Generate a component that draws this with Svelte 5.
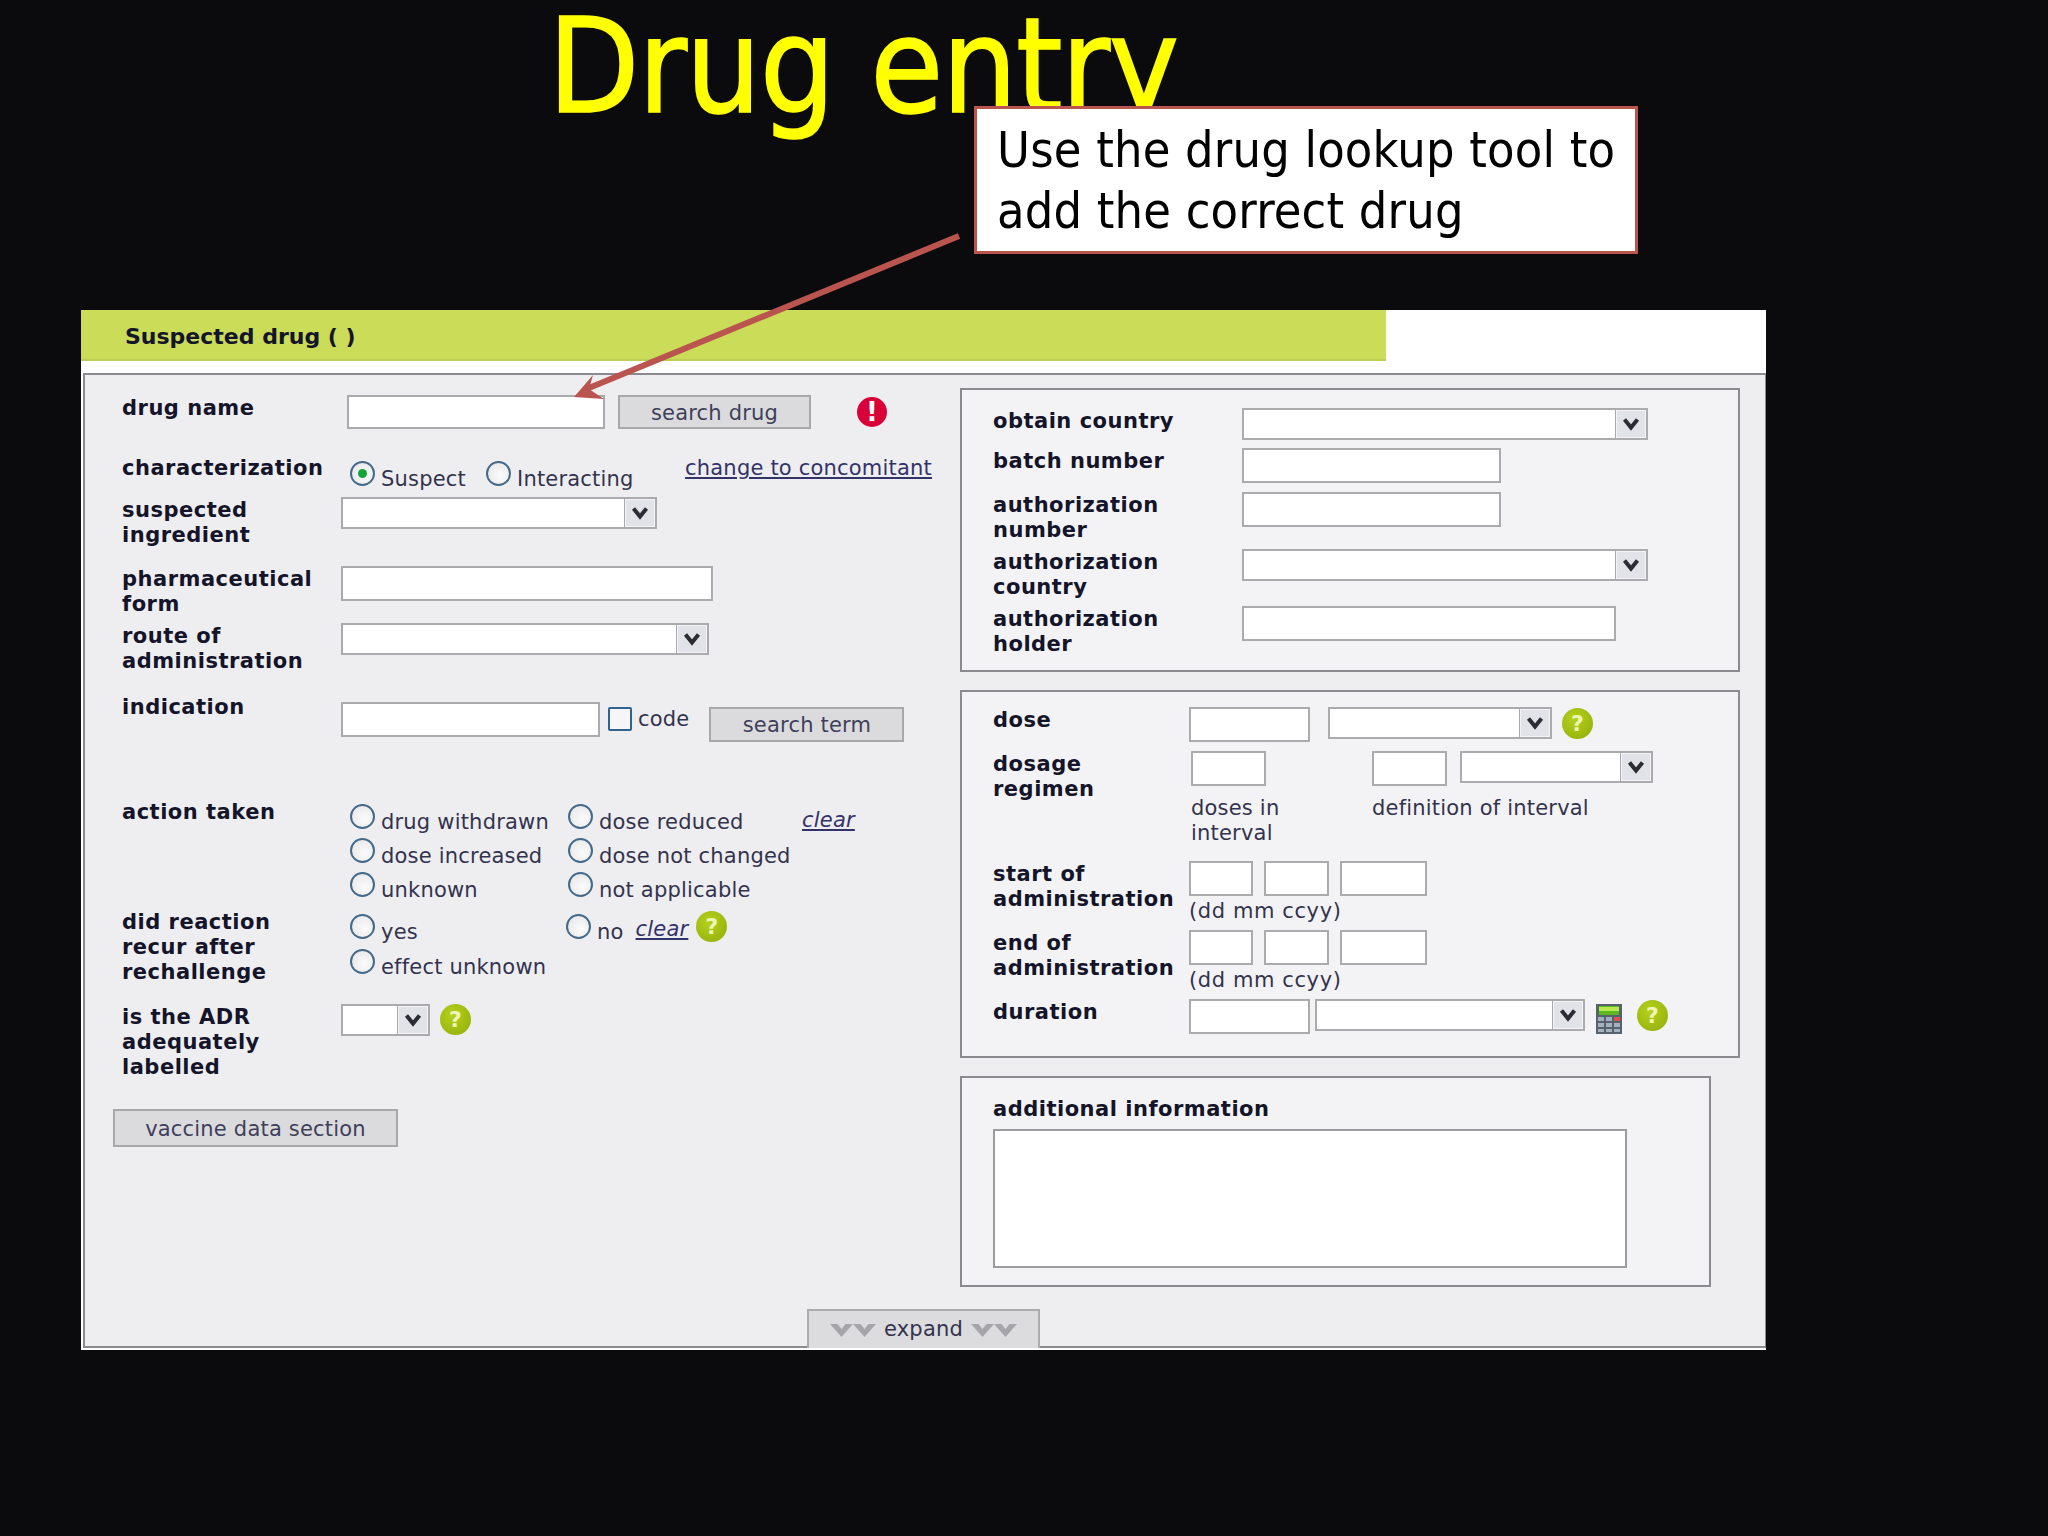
<script>
  const actionOptions = [
    "drug withdrawn",
    "dose reduced",
    "dose increased",
    "dose not changed",
    "unknown",
    "not applicable",
  ];
</script>

{#snippet radio(text, checked = false)}
  <label class="opt">
    <span class="radio" class:checked></span>
    <span class="opt-text">{text}</span>
  </label>
{/snippet}

{#snippet dropdown(size)}
  <div class="select {size}">
    <span class="select-btn">
      <svg width="20" height="16" viewBox="0 0 20 16"><path d="M3.5 3.5 L10 11.5 L16.5 3.5" fill="none" stroke="#2c2c34" stroke-width="4" /></svg>
    </span>
  </div>
{/snippet}

{#snippet help()}
  <span class="help">?</span>
{/snippet}

{#snippet chevrons()}
  <svg width="46" height="16" viewBox="0 0 46 16"><path d="M0 2 L11.5 15 L23 2 L34.5 15 L46 2 L38.5 2 L34.5 7 L30.5 2 L15.5 2 L11.5 7 L7.5 2 Z" fill="#a6a6aa" /></svg>
{/snippet}

<div class="slide">
  <h1 class="title">Drug entry</h1>

  <div class="sheet">
    <div class="band">Suspected drug ( )</div>

    <div class="form">
      <div class="columns">
        <div class="left">
          <div class="row r-drug">
            <span class="lbl">drug name</span>
            <div class="fields">
              <input class="inp w-drug" />
              <button class="btn b-drug">search drug</button>
              <span class="alert">!</span>
            </div>
          </div>

          <div class="row r-char">
            <span class="lbl">characterization</span>
            <div class="fields char-fields">
              <div class="char-radios">
                {@render radio("Suspect", true)}
                {@render radio("Interacting")}
              </div>
              <a class="link" href="#top">change to concomitant</a>
            </div>
          </div>

          <div class="row r-ingredient">
            <span class="lbl">suspected<br />ingredient</span>
            <div class="fields">{@render dropdown("s-316")}</div>
          </div>

          <div class="row r-form">
            <span class="lbl">pharmaceutical<br />form</span>
            <div class="fields"><input class="inp w-form" /></div>
          </div>

          <div class="row r-route">
            <span class="lbl">route of<br />administration</span>
            <div class="fields">{@render dropdown("s-368")}</div>
          </div>

          <div class="row r-indication">
            <span class="lbl">indication</span>
            <div class="fields ind-fields">
              <input class="inp w-ind" />
              <span class="check"></span>
              <span class="code">code</span>
              <button class="btn b-term">search term</button>
            </div>
          </div>

          <div class="row r-action">
            <span class="lbl">action taken</span>
            <div class="action-grid">
              {#each actionOptions as option, i (option)}
                {@render radio(option)}
                {#if i === 1}
                  <a class="clear clear-action" href="#top">clear</a>
                {:else if i % 2 === 1}
                  <span></span>
                {/if}
              {/each}
            </div>
          </div>

          <div class="row r-recur">
            <span class="lbl">did reaction<br />recur after<br />rechallenge</span>
            <div class="recur">
              <div class="recur-line">
                <div class="yes">{@render radio("yes")}</div>
                {@render radio("no")}
                <a class="clear clear-recur" href="#top">clear</a>
                <span class="recur-help">{@render help()}</span>
              </div>
              {@render radio("effect unknown")}
            </div>
          </div>

          <div class="row r-adr">
            <span class="lbl">is the ADR<br />adequately<br />labelled</span>
            <div class="fields adr-fields">
              {@render dropdown("s-89")}
              {@render help()}
            </div>
          </div>

          <button class="btn b-vaccine">vaccine data section</button>
        </div>

        <div class="right">
          <section class="box box-country">
            <div class="brow h40">
              <span class="lbl c249">obtain country</span>
              {@render dropdown("s-406")}
            </div>
            <div class="brow h44">
              <span class="lbl c249">batch number</span>
              <input class="inp w-259" />
            </div>
            <div class="brow h57">
              <span class="lbl c249">authorization<br />number</span>
              <input class="inp w-259" />
            </div>
            <div class="brow h57">
              <span class="lbl c249">authorization<br />country</span>
              {@render dropdown("s-406")}
            </div>
            <div class="brow">
              <span class="lbl c249">authorization<br />holder</span>
              <input class="inp w-374" />
            </div>
          </section>

          <section class="box box-dose">
            <div class="brow h44">
              <span class="lbl c196">dose</span>
              <input class="inp w-121" />
              {@render dropdown("s-224")}
              <span class="dose-help">{@render help()}</span>
            </div>
            <div class="brow h110">
              <span class="lbl c196">dosage<br />regimen</span>
              <div class="regimen">
                <div class="reg-col reg-first">
                  <input class="inp w-75" />
                  <span class="note">doses in<br />interval</span>
                </div>
                <div class="reg-col">
                  <div class="reg-line">
                    <input class="inp w-75" />
                    {@render dropdown("s-193")}
                  </div>
                  <span class="note">definition of interval</span>
                </div>
              </div>
            </div>
            <div class="brow h69">
              <span class="lbl c196">start of<br />administration</span>
              <div>
                <div class="dates">
                  <input class="inp w-64" />
                  <input class="inp w-65" />
                  <input class="inp w-87" />
                </div>
                <span class="note">(dd mm ccyy)</span>
              </div>
            </div>
            <div class="brow h69">
              <span class="lbl c196">end of<br />administration</span>
              <div>
                <div class="dates">
                  <input class="inp w-64" />
                  <input class="inp w-65" />
                  <input class="inp w-87" />
                </div>
                <span class="note">(dd mm ccyy)</span>
              </div>
            </div>
            <div class="brow">
              <span class="lbl c196">duration</span>
              <input class="inp w-121" />
              {@render dropdown("s-270")}
              <svg class="calc" width="26" height="30" viewBox="0 0 26 30">
                <rect width="26" height="30" fill="#56636f" />
                <rect x="3" y="2" width="20" height="9" fill="#5fb81e" />
                <rect x="3" y="3" width="20" height="4" fill="#b8ea50" />
                <g fill="#a4b0bd">
                  <rect x="2" y="13" width="6" height="4" />
                  <rect x="10" y="13" width="6" height="4" />
                  <rect x="2" y="19" width="6" height="4" />
                  <rect x="10" y="19" width="6" height="4" />
                  <rect x="18" y="19" width="6" height="4" />
                  <rect x="2" y="25" width="6" height="3" />
                  <rect x="10" y="25" width="6" height="3" />
                  <rect x="18" y="25" width="6" height="3" />
                </g>
                <rect x="18" y="13" width="6" height="4" fill="#d9534f" />
              </svg>
              <span class="dur-help">{@render help()}</span>
            </div>
          </section>

          <section class="box box-info">
            <span class="lbl">additional information</span>
            <textarea class="info"></textarea>
          </section>
        </div>
      </div>

      <div class="tab">
        {@render chevrons()}
        <span>expand</span>
        {@render chevrons()}
      </div>
    </div>
  </div>

  <svg class="arrow" width="2048" height="1536" viewBox="0 0 2048 1536">
    <path d="M959 236 L584 390" fill="none" stroke="#b9544f" stroke-width="6" />
    <path d="M574 397 L593 375 L589 389 L604 399 Z" fill="#b9544f" />
  </svg>

  <div class="callout">Use the drug lookup tool to<br />add the correct drug</div>
</div>

<style>
  :global(body) {
    margin: 0;
    background: #0b0b0d;
  }

  .slide {
    position: relative;
    width: 2048px;
    height: 1536px;
    overflow: hidden;
    background: #0b0b0d;
    font-family: "DejaVu Sans", Verdana, sans-serif;
    font-size: 21px;
    letter-spacing: 0.2px;
    line-height: 25px;
    color: #33334f;
  }

  .title {
    margin: 0;
    height: 310px;
    padding-left: 548px;
    box-sizing: border-box;
    font-family: "DejaVu Sans Condensed", "DejaVu Sans", sans-serif;
    font-weight: 400;
    font-size: 132px;
    letter-spacing: -1.3px;
    line-height: 133px;
    color: #ffff00;
    -webkit-text-stroke: 1.5px #ffff00;
  }

  .sheet {
    width: 1685px;
    height: 1040px;
    margin-left: 81px;
    background: #fff;
    box-sizing: border-box;
    padding-left: 2px;
    display: flex;
    flex-direction: column;
  }

  .band {
    width: 1305px;
    height: 51px;
    margin: 0 0 12px -2px;
    padding-left: 44px;
    box-sizing: border-box;
    background: #cadc58;
    border-bottom: 2px solid #bccf55;
    font-weight: 700;
    font-size: 22px;
    letter-spacing: 0;
    line-height: 54px;
    color: #14142a;
  }

  .form {
    height: 975px;
    box-sizing: border-box;
    border: 2px solid #8b8b8f;
    border-right-width: 1px;
    background: #eeeef0;
    display: flex;
    flex-direction: column;
  }

  .columns {
    flex: 1;
    display: flex;
  }

  .left {
    width: 875px;
    padding: 20px 0 0 37px;
    box-sizing: border-box;
  }

  .right {
    padding-top: 13px;
    display: flex;
    flex-direction: column;
    gap: 18px;
  }

  .lbl {
    padding-top: 1px;
    font-weight: 700;
    font-size: 21px;
    letter-spacing: 0.5px;
    color: #14142a;
    display: block;
    white-space: nowrap;
  }

  .row {
    display: flex;
  }

  .row > .lbl {
    width: 219px;
    flex: none;
  }

  .r-drug { height: 60px; }
  .r-char { height: 42px; }
  .r-ingredient { height: 69px; }
  .r-form { height: 57px; }
  .r-route { height: 71px; }
  .r-indication { height: 105px; }
  .r-action { height: 110px; }
  .r-recur { height: 95px; }
  .r-adr { height: 105px; }

  .fields {
    display: flex;
    align-items: flex-start;
  }

  .inp {
    display: block;
    flex: none;
    height: 35px;
    box-sizing: border-box;
    padding: 0;
    border: 2px solid #ababad;
    border-radius: 0;
    background: #fff;
    outline: none;
  }

  .w-drug { width: 258px; height: 34px; margin-left: 6px; }
  .w-form { width: 372px; }
  .w-ind { width: 259px; margin-top: 8px; }
  .w-259 { width: 259px; }
  .w-374 { width: 374px; }
  .w-121 { width: 121px; }
  .w-75 { width: 75px; }
  .w-64 { width: 64px; }
  .w-65 { width: 65px; }
  .w-87 { width: 87px; }

  .btn {
    flex: none;
    box-sizing: border-box;
    padding: 2px 0 0;
    border: 2px solid #a8a8aa;
    background: #dbdbdd;
    color: #3f3f5c;
    font: inherit;
    letter-spacing: inherit;
    text-align: center;
  }

  .b-drug { width: 193px; height: 34px; margin-left: 13px; }
  .b-term { width: 195px; height: 35px; margin: 13px 0 0 20px; }
  .b-vaccine { width: 285px; height: 38px; margin-left: -9px; }

  .alert {
    width: 30px;
    height: 30px;
    margin: 2px 0 0 46px;
    border-radius: 50%;
    background: #d9003a;
    color: #fff;
    font-weight: 700;
    font-size: 26px;
    line-height: 30px;
    text-align: center;
  }

  .char-fields {
    width: 591px;
    justify-content: space-between;
  }

  .char-radios {
    display: flex;
    gap: 20px;
    margin: 6px 0 0 9px;
  }

  .link {
    margin-top: 1px;
    color: #33336b;
    text-decoration: underline;
    white-space: nowrap;
  }

  .opt {
    display: flex;
    gap: 6px;
    white-space: nowrap;
  }

  .opt-text {
    margin-top: 6px;
  }

  .radio {
    flex: none;
    width: 25px;
    height: 25px;
    box-sizing: border-box;
    border: 2.5px solid #44698a;
    border-radius: 50%;
    background: radial-gradient(circle at 60% 60%, #fbfbfb, #e4e4e6);
    display: flex;
    align-items: center;
    justify-content: center;
  }

  .radio.checked::after {
    content: "";
    width: 9px;
    height: 9px;
    border-radius: 50%;
    background: #12a33a;
  }

  .check {
    flex: none;
    width: 24px;
    height: 24px;
    box-sizing: border-box;
    margin: 13px 0 0 8px;
    border: 2px solid #2f628c;
    border-radius: 2px;
    background: #f6f6f8;
  }

  .code {
    margin: 13px 0 0 6px;
  }

  .select {
    flex: none;
    height: 32px;
    box-sizing: border-box;
    border: 2px solid #ababad;
    background: #fff;
    display: flex;
    justify-content: flex-end;
  }

  .select-btn {
    width: 30px;
    box-sizing: border-box;
    border: 1px solid #f4f4f6;
    background: #e2e2e9;
    box-shadow: -1px 0 0 #a8a8ae;
    display: flex;
    align-items: center;
    justify-content: center;
  }

  .s-316 { width: 316px; }
  .s-368 { width: 368px; }
  .s-89 { width: 89px; }
  .s-406 { width: 406px; }
  .s-224 { width: 224px; margin-left: 18px; }
  .s-193 { width: 193px; }
  .s-270 { width: 270px; margin-left: 5px; }

  .help {
    flex: none;
    width: 31px;
    height: 31px;
    border-radius: 50%;
    background: radial-gradient(circle at 40% 35%, #b5d01c, #90ad0a);
    color: #eef5b5;
    font-weight: 700;
    font-size: 22px;
    line-height: 31px;
    text-align: center;
    display: block;
  }

  .adr-fields {
    gap: 10px;
  }

  .action-grid {
    display: grid;
    grid-template-columns: 218px 234px auto;
    grid-auto-rows: 34px;
    margin: 5px 0 0 9px;
    align-self: flex-start;
  }

  .clear {
    font-style: italic;
    color: #33336b;
    text-decoration: underline;
  }

  .clear-action { margin-top: 4px; }

  .recur {
    margin: 5px 0 0 9px;
    display: flex;
    flex-direction: column;
  }

  .recur-line {
    display: flex;
    align-items: flex-start;
    height: 35px;
  }

  .yes { width: 216px; }
  .clear-recur { margin: 3px 0 0 12px; }
  .recur-help { margin: -3px 0 0 8px; }

  .box {
    box-sizing: border-box;
    width: 780px;
    border: 2px solid #8b8b8f;
    background: #f3f3f5;
    padding-left: 31px;
  }

  .box-country { height: 284px; padding-top: 18px; }
  .box-dose { height: 368px; padding-top: 15px; }
  .box-info { width: 751px; height: 211px; padding-top: 18px; }

  .brow {
    display: flex;
    align-items: flex-start;
  }

  .h40 { height: 40px; }
  .h44 { height: 44px; }
  .h57 { height: 57px; }
  .h69 { height: 69px; }
  .h110 { height: 110px; }

  .c249 { width: 249px; flex: none; }
  .c196 { width: 196px; flex: none; }

  .dose-help { margin: 1px 0 0 10px; }
  .dur-help { margin: 1px 0 0 15px; }
  .calc { flex: none; margin: 5px 0 0 11px; }

  .regimen {
    display: flex;
    margin-left: 2px;
  }

  .reg-col {
    width: 180px;
  }

  .reg-first {
    width: 181px;
  }

  .reg-line {
    display: flex;
    gap: 13px;
    width: 300px;
  }

  .note {
    display: block;
    margin-top: 10px;
    white-space: nowrap;
  }

  .dates {
    display: flex;
    gap: 11px;
  }

  .dates + .note {
    margin-top: 3px;
    letter-spacing: 0.6px;
  }

  .info {
    display: block;
    width: 634px;
    height: 139px;
    margin-top: 7px;
    box-sizing: border-box;
    padding: 0;
    border: 2px solid #9c9c9f;
    border-radius: 0;
    background: #fff;
    resize: none;
    outline: none;
  }

  .tab {
    align-self: flex-start;
    width: 233px;
    height: 39px;
    margin: 0 0 -2px 722px;
    box-sizing: border-box;
    border: 2px solid #ababad;
    border-bottom: none;
    background: #dcdcde;
    display: flex;
    align-items: center;
    justify-content: center;
    gap: 8px;
  }

  .arrow {
    position: absolute;
    left: 0;
    top: 0;
    pointer-events: none;
  }

  .callout {
    position: absolute;
    left: 974px;
    top: 106px;
    width: 664px;
    height: 148px;
    box-sizing: border-box;
    padding: 11px 0 0 20px;
    border: 3px solid #b9544f;
    background: #fff;
    color: #000;
    font-family: "DejaVu Sans Condensed", "DejaVu Sans", sans-serif;
    font-size: 50px;
    letter-spacing: 0.2px;
    line-height: 61px;
    white-space: nowrap;
  }
</style>
